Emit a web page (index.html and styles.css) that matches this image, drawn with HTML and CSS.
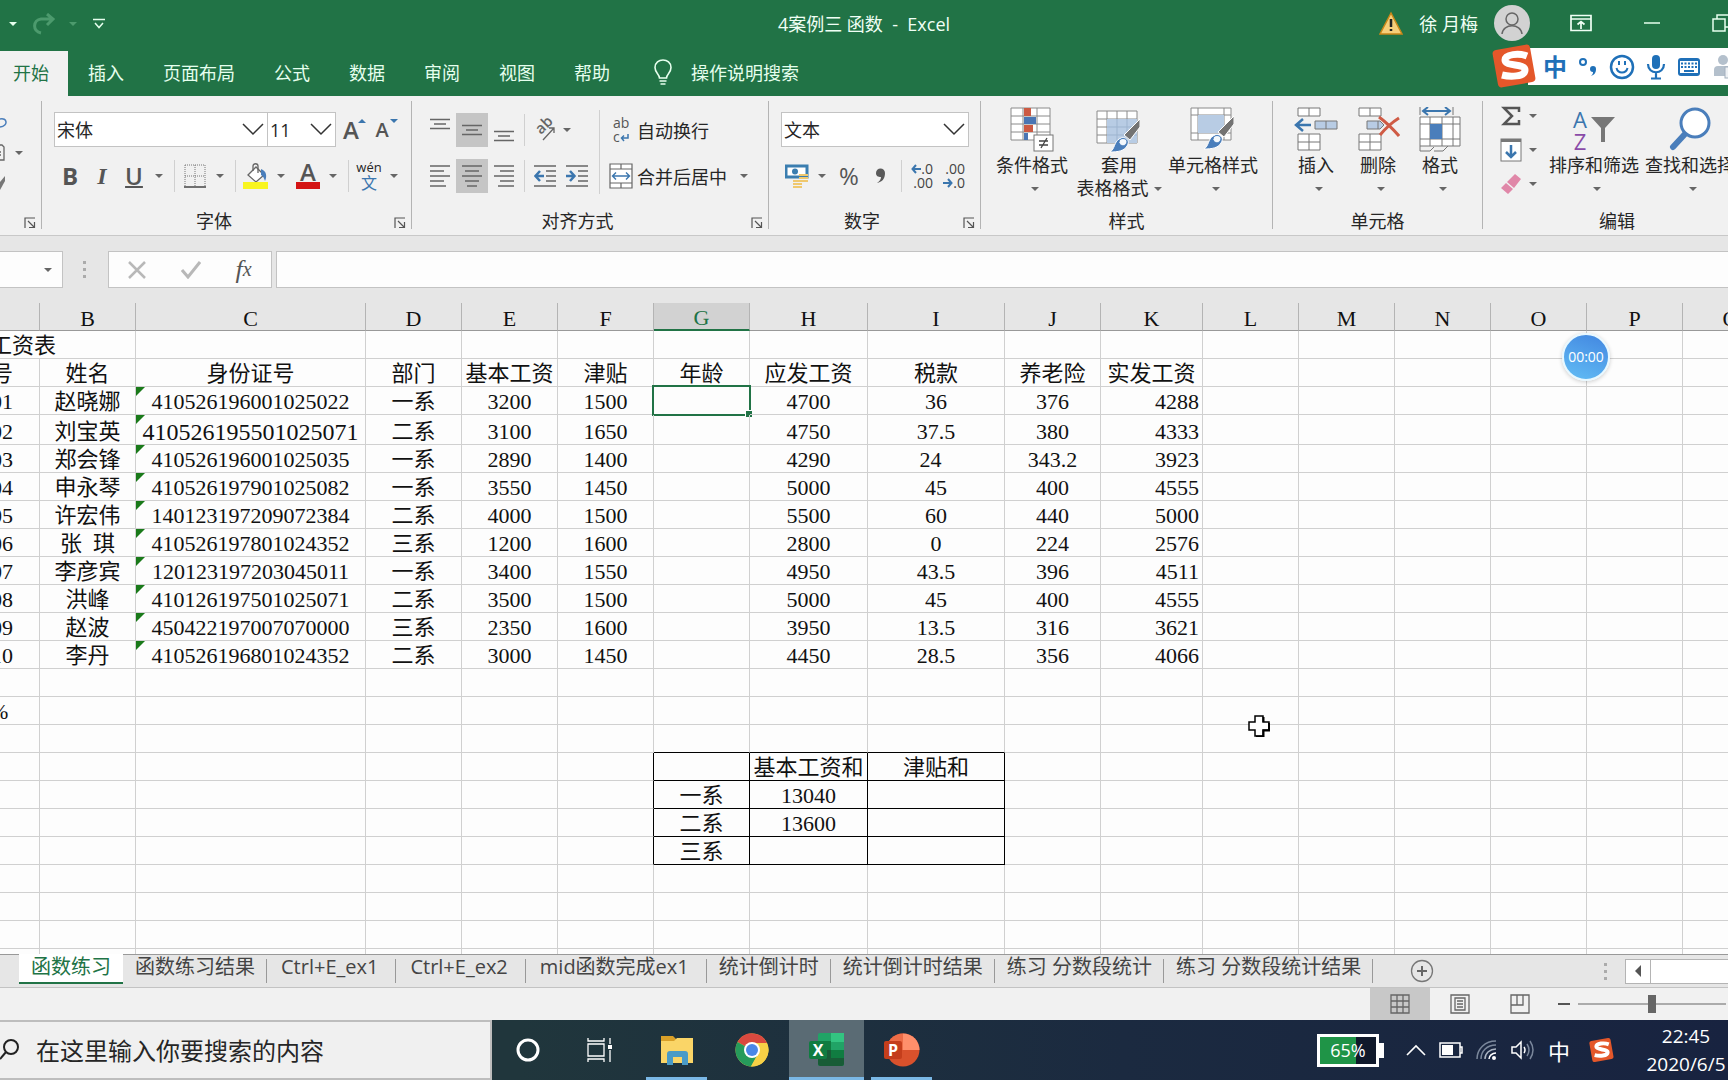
FILE: index.html
```html
<!DOCTYPE html>
<html lang="zh-CN">
<head>
    <meta charset="UTF-8">
    <meta name="viewport" content="width=device-width, initial-scale=1.0">
    <title>4案例三 函数 - Excel</title>
    <link rel="stylesheet" href="styles.css">
</head>
<body>
    <svg class="defs" width="0" height="0">
        <symbol id="launcher" viewBox="0 0 12 12">
            <path d="M1 11V1H11M4 4L10 10M10.5 5V10.5H5" fill="none" stroke="#555" stroke-width="1.2"/>
        </symbol>
        <symbol id="sogou" viewBox="0 0 46 44">
            <rect x="3" y="3" width="38" height="38" rx="4" transform="rotate(-10 22 22)" fill="#e4572a"/>
            <path d="M35 12C27 9 13 10 13 16C13 23 33 19 33 26C33 33 18 33 10 31" fill="none" stroke="#fff" stroke-width="7"/>
        </symbol>
        <symbol id="brush" viewBox="0 0 31 35">
            <path d="M31 1V9L21 22L15 17Z" fill="#737373" stroke="#fff"/>
            <path d="M1 34C6 31 5 24 10 21C16 17 22 23 18 28C15 33 9 34 1 34Z" fill="#4a7ebb" stroke="#fff"/>
            <path d="M10 24C11 19 17 20 18 23C18 27 14 29 12 27" fill="#f3f8fc" stroke="#4a7ebb"/>
        </symbol>
    </svg>

    <header class="titlebar">
        <div class="quick">
            <button class="caret light" aria-label="撤消选项"></button>
            <button aria-label="恢复"><svg width="24" height="22" viewBox="0 0 24 22"><path d="M9 20C0 18 1 7 9 6H20M15 1L21 6L15 12" fill="none" stroke="#4c9a6d" stroke-width="3"/></svg></button>
            <button class="caret faded" aria-label="恢复选项"></button>
            <button aria-label="自定义快速访问工具栏"><svg width="14" height="12" viewBox="0 0 14 12"><path d="M1 1.5H13M3 5L7 9.5L11 5" fill="none" stroke="#e6ffee" stroke-width="1.5"/></svg></button>
        </div>
        <h1 class="doc-title">4案例三 函数&nbsp; -&nbsp; Excel</h1>
        <div class="account">
            <svg width="24" height="24" viewBox="0 0 24 24"><path d="M12 2L23 23H1Z" fill="#f6cf7a" stroke="#c98719" stroke-width="1.5"/><path d="M12 8V16M12 18V20" stroke="#222" stroke-width="2.5"/></svg>
            <span class="user">徐 月梅</span>
            <svg class="avatar" width="36" height="36" viewBox="0 0 36 36"><circle cx="18" cy="18" r="18" fill="#d2d2d2"/><g fill="none" stroke="#666" stroke-width="1.5"><circle cx="18" cy="14" r="6"/><path d="M8 29C9 18 27 18 28 29"/></g></svg>
            <button aria-label="功能区显示选项"><svg width="22" height="18" viewBox="0 0 22 18"><path d="M1 1.5H21V16.5H1ZM1 5H21M11 15V8M7.5 10.5L11 7.5L14.5 10.5" fill="none" stroke="#f0fff5" stroke-width="1.7"/></svg></button>
            <button class="minimize" aria-label="最小化"><svg width="16" height="4" viewBox="0 0 16 4"><path d="M0 2H16" stroke="#e6ffee" stroke-width="1.5"/></svg></button>
            <button aria-label="还原"><svg width="18" height="18" viewBox="0 0 18 18"><path d="M1 5H13V17H1ZM5 5V1H17V13H13" fill="none" stroke="#e6ffee" stroke-width="1.5"/></svg></button>
        </div>
    </header>

    <nav class="tabs">
        <a class="tab active" href="#">开始</a>
        <a class="tab" href="#">插入</a>
        <a class="tab" href="#">页面布局</a>
        <a class="tab" href="#">公式</a>
        <a class="tab" href="#">数据</a>
        <a class="tab" href="#">审阅</a>
        <a class="tab" href="#">视图</a>
        <a class="tab" href="#">帮助</a>
        <a class="tell-me" href="#">
            <svg width="18" height="26" viewBox="0 0 18 26"><path d="M5.5 19C5.5 15 1 14 1 8.500C1 -1.5 17 -1.5 17 8.500C17 14 12.500 15 12.500 19ZM5.500 22H12.500M6.500 25H11.500" fill="none" stroke="#e6ffee" stroke-width="1.6"/></svg>
            操作说明搜索
        </a>
    </nav>

    <div class="ime">
        <svg class="ime-logo" width="46" height="44"><use href="#sogou"/></svg>
        <div class="ime-bar">
            <span class="ime-lang">中</span>
            <svg width="20" height="24" viewBox="0 0 20 24"><circle cx="5" cy="7" r="3" fill="none" stroke="#1f70b8" stroke-width="2"/><path d="M12 14a3 3 0 1 1 6 0c0 4-2 6-5 7 2-2 2-3 2-4-2 0-3-1-3-3Z" fill="#1f70b8"/></svg>
            <svg width="26" height="26" viewBox="0 0 26 26"><circle cx="13" cy="13" r="11" fill="none" stroke="#1f70b8" stroke-width="2.5"/><path d="M10 7V11M16 7V11M7.5 14C9 20 17 20 18.5 14" fill="none" stroke="#1f70b8" stroke-width="2"/></svg>
            <svg width="20" height="26" viewBox="0 0 20 26"><rect x="6" y="1" width="8" height="14" rx="4" fill="#1f70b8"/><path d="M2 10C2 21 18 21 18 10M10 18V24M5 24.5H15" fill="none" stroke="#1f70b8" stroke-width="2.2"/></svg>
            <svg width="24" height="20" viewBox="0 0 24 20"><rect x="1" y="1" width="22" height="18" rx="3" fill="#1f70b8"/><rect x="3" y="4" width="18" height="12" fill="#fff"/><path d="M4 6.500H20M4 10H20" stroke="#1f70b8" stroke-width="2" stroke-dasharray="2 1.500"/><path d="M7 14H17" stroke="#1f70b8" stroke-width="2"/></svg>
            <svg width="24" height="26" viewBox="0 0 24 26"><circle cx="11" cy="6" r="5" fill="#b4c0cc"/><path d="M2 22V16Q2 12 6 12H17Q20 12 20 16V22Z" fill="#b4c0cc"/><rect x="13" y="13" width="11" height="11" fill="#eef1f4" stroke="#a3b0bd"/></svg>
        </div>
    </div>

    <section class="ribbon">
        <div class="group clipboard">
            <div class="group-body clip-body">
                <svg width="10" height="14" viewBox="0 0 10 14"><path d="M0 2C7 0 9 9 0 10" fill="none" stroke="#4a7ebb" stroke-width="1.5"/></svg>
                <div class="row-copy">
                    <svg width="10" height="18" viewBox="0 0 10 18"><path d="M-2 1H2L4 3V16H-2M-2 8H1M-2 11H1" fill="none" stroke="#666" stroke-width="1.3"/></svg>
                    <button class="caret" aria-label="复制选项"></button>
                </div>
                <svg width="10" height="18" viewBox="0 0 10 18"><path d="M5 1L0 7V15L5 6Z" fill="#777"/></svg>
            </div>
            <div class="group-label">&nbsp;<button class="launcher" aria-label="剪贴板设置"><svg width="12" height="12"><use href="#launcher"/></svg></button></div>
        </div>

        <div class="group font-group">
            <div class="group-body rows">
                <div class="row">
                    <select class="combo font-name" aria-label="字体"><option>宋体</option></select>
                    <select class="combo font-size" aria-label="字号"><option>11</option></select>
                    <button class="tool glyph grow" aria-label="增大字号">A<i class="up"></i></button>
                    <button class="tool glyph shrink" aria-label="减小字号">A<i class="down"></i></button>
                </div>
                <div class="row">
                    <button class="tool glyph bold">B</button>
                    <button class="tool glyph italic">I</button>
                    <button class="tool glyph underline">U</button>
                    <button class="caret" aria-label="下划线选项"></button>
                    <span class="sep"></span>
                    <button class="tool" aria-label="边框"><svg width="22" height="24" viewBox="0 0 22 24"><path d="M1 1H21M1 12H21M1 1V22M11 1V22M21 1V22" fill="none" stroke="#777" stroke-dasharray="1 1"/><path d="M0 23H22" stroke="#444" stroke-width="1.5"/></svg></button>
                    <button class="caret" aria-label="边框选项"></button>
                    <span class="sep"></span>
                    <button class="tool" aria-label="填充颜色"><svg width="26" height="26" viewBox="0 0 26 26"><path d="M5 12L13 4L21 12L13 19Z" fill="#fff" stroke="#666" stroke-width="1.3"/><path d="M10 8V3C10 0 15 0 15 3V10" fill="none" stroke="#666" stroke-width="1.3"/><path d="M18 6C24 8 24 14 22 18C21 15 20 13 18 12Z" fill="#4a7ebb"/><rect y="19" width="25" height="7" fill="#f8f520"/></svg></button>
                    <button class="caret" aria-label="填充颜色选项"></button>
                    <button class="tool glyph font-color" aria-label="字体颜色">A</button>
                    <button class="caret" aria-label="字体颜色选项"></button>
                    <span class="sep"></span>
                    <button class="tool pinyin" aria-label="拼音"><span>wén</span><b>文</b></button>
                    <button class="caret" aria-label="拼音选项"></button>
                </div>
            </div>
            <div class="group-label">字体<button class="launcher" aria-label="字体设置"><svg width="12" height="12"><use href="#launcher"/></svg></button></div>
        </div>

        <div class="group align-group">
            <div class="group-body align-body">
                <div class="rows">
                    <div class="row">
                        <button class="tool" aria-label="顶端对齐"><svg width="20" height="32" viewBox="0 0 20 32"><path d="M0 5.500H20M4 10H16M0 14.500H20" stroke="#666" stroke-width="1.3"/></svg></button>
                        <button class="tool on" aria-label="垂直居中"><svg width="20" height="32" viewBox="0 0 20 32"><path d="M0 11.500H20M4 16H16M0 20.500H20" stroke="#666" stroke-width="1.3"/></svg></button>
                        <button class="tool" aria-label="底端对齐"><svg width="20" height="32" viewBox="0 0 20 32"><path d="M0 17.500H20M4 22H16M0 26.500H20" stroke="#666" stroke-width="1.3"/></svg></button>
                        <span class="sep"></span>
                        <button class="tool" aria-label="方向"><svg width="24" height="24" viewBox="0 0 24 24"><text transform="translate(8 17) rotate(-45)" font-size="15" font-weight="600" fill="#666">ab</text><path d="M10 22L21 10M16 10H21V15" fill="none" stroke="#666" stroke-width="1.3"/></svg></button>
                        <button class="caret slim" aria-label="方向选项"></button>
                    </div>
                    <div class="row">
                        <button class="tool" aria-label="左对齐"><svg width="20" height="24" viewBox="0 0 20 24"><path d="M0 2H20M0 7H14M0 12H20M0 17H14M0 22H16" stroke="#666" stroke-width="1.3"/></svg></button>
                        <button class="tool on" aria-label="居中"><svg width="20" height="24" viewBox="0 0 20 24"><path d="M0 2H20M3 7H17M0 12H20M3 17H17M5 22H15" stroke="#666" stroke-width="1.3"/></svg></button>
                        <button class="tool" aria-label="右对齐"><svg width="20" height="24" viewBox="0 0 20 24"><path d="M0 2H20M6 7H20M0 12H20M6 17H20M4 22H20" stroke="#666" stroke-width="1.3"/></svg></button>
                        <span class="sep"></span>
                        <button class="tool" aria-label="减少缩进量"><svg width="22" height="24" viewBox="0 0 22 24"><path d="M0 2H22M12 7H22M12 12H22M12 17H22M0 22H22" stroke="#666" stroke-width="1.3"/><path d="M10 12H2M6 7L1.5 12L6 17" fill="none" stroke="#3b76ae" stroke-width="2.5"/></svg></button>
                        <button class="tool" aria-label="增加缩进量"><svg width="22" height="24" viewBox="0 0 22 24"><path d="M0 2H22M12 7H22M12 12H22M12 17H22M0 22H22" stroke="#666" stroke-width="1.3"/><path d="M0 12H8M4 7L8.5 12L4 17" fill="none" stroke="#3b76ae" stroke-width="2.5"/></svg></button>
                    </div>
                </div>
                <span class="sep tall"></span>
                <div class="rows">
                    <div class="row">
                        <button class="wide"><span class="wrap-icon"><span>ab</span><span>c<svg width="9" height="8" viewBox="0 0 9 8"><path d="M8 0V4H2M4 1.5L1.5 4L4 7" fill="none" stroke="#3b76ae" stroke-width="1.5"/></svg></span></span>自动换行</button>
                    </div>
                    <div class="row">
                        <button class="wide"><svg width="24" height="26" viewBox="0 0 24 26"><path d="M1 1H23V25H1ZM1 6H23M1 20H23M12 1V6M12 20V25" fill="#fff" stroke="#666" stroke-width="1.2"/><path d="M4 13H20M7 9.500L3.500 13L7 16.500M17 9.500L20.500 13L17 16.500" fill="none" stroke="#3b76ae" stroke-width="1.4"/></svg>合并后居中</button>
                        <button class="caret merge" aria-label="合并选项"></button>
                    </div>
                </div>
            </div>
            <div class="group-label">对齐方式<button class="launcher" aria-label="对齐设置"><svg width="12" height="12"><use href="#launcher"/></svg></button></div>
        </div>

        <div class="group number-group">
            <div class="group-body rows">
                <div class="row">
                    <select class="combo number-format" aria-label="数字格式"><option>文本</option></select>
                </div>
                <div class="row">
                    <button class="tool" aria-label="会计数字格式"><svg width="24" height="24" viewBox="0 0 24 24"><rect x="1" y="2" width="21" height="11" fill="#fff" stroke="#3b7eb0" stroke-width="3"/><circle cx="10" cy="7.5" r="3" fill="#3b7eb0"/><path d="M14 11H23M14 14H23M14 17H23M8 17H17M8 20H17M8 23H17" stroke="#efc86e" stroke-width="2"/></svg></button>
                    <button class="caret" aria-label="会计格式选项"></button>
                    <button class="tool glyph percent">%</button>
                    <button class="tool" aria-label="千位分隔样式"><svg width="12" height="16" viewBox="0 0 12 16"><path d="M1 5a4.500 4.500 0 1 1 9 0c0 6-3 9-8 10c3-2 4-4 4-6c-3 0-5-1-5-4Z" fill="#5a5a5a"/></svg></button>
                    <span class="sep"></span>
                    <button class="tool decimals" aria-label="增加小数位数"><span><svg width="10" height="10" viewBox="0 0 10 10"><path d="M10 5H2M5 1L1.5 5L5 9" fill="none" stroke="#3b76ae" stroke-width="2"/></svg>.0</span><span>.00</span></button>
                    <button class="tool decimals" aria-label="减少小数位数"><span>.00</span><span><svg width="10" height="10" viewBox="0 0 10 10"><path d="M0 5H8M5 1L8.5 5L5 9" fill="none" stroke="#3b76ae" stroke-width="2"/></svg>.0</span></button>
                </div>
            </div>
            <div class="group-label">数字<button class="launcher" aria-label="数字设置"><svg width="12" height="12"><use href="#launcher"/></svg></button></div>
        </div>

        <div class="group style-group">
            <div class="group-body bigs">
                <button class="big">
                    <svg width="44" height="46" viewBox="0 0 44 46"><path d="M1 1H40V33H1ZM1 9H40M1 17H40M1 25H40M13 1V33M27 1V33" fill="#fff" stroke="#8a8a8a"/><path d="M14 1H21V9H14ZM14 18H23V25H14Z" fill="#cc5a43"/><path d="M14 10H26V17H14ZM14 26H18V33H14Z" fill="#4a76b4"/><rect x="24" y="28" width="19" height="16" fill="#fff" stroke="#777"/><path d="M29 34H38M29 38H38M37 31L31 41" stroke="#444" stroke-width="1.3"/></svg>
                    <span>条件格式</span><span><i class="arrow"></i></span>
                </button>
                <button class="big">
                    <svg width="46" height="46" viewBox="0 0 46 46"><path d="M1 4H41V36H1ZM1 12H41M1 20H41M1 28H41M11 4V36M21 4V36M31 4V36" fill="#fff" stroke="#8a8a8a"/><path d="M11 12H41V36H11Z" fill="#b8cce4"/><path d="M11 20H41M11 28H41M21 12V36M31 12V36" stroke="#9db4cf"/><use href="#brush" x="13" y="11" width="31" height="35"/></svg>
                    <span>套用</span><span>表格格式<i class="arrow beside"></i></span>
                </button>
                <button class="big">
                    <svg width="46" height="46" viewBox="0 0 46 46"><path d="M1 1H41V33H1ZM1 8H41M1 26H41M8 1V33M34 1V33" fill="#fff" stroke="#8a8a8a"/><path d="M8 8H34V26H8Z" fill="#b8cce4"/><use href="#brush" x="13" y="8" width="31" height="35"/></svg>
                    <span>单元格样式</span><span><i class="arrow"></i></span>
                </button>
            </div>
            <div class="group-label">样式</div>
        </div>

        <div class="group cells-group">
            <div class="group-body bigs">
                <button class="big">
                    <svg width="44" height="46" viewBox="0 0 44 46"><path d="M4 1H26V9H4ZM15 1V9M4 27H26V43H4ZM4 35H26M15 27V43" fill="#fff" stroke="#777"/><path d="M21 14H43V22H21ZM32 14V22" fill="#b8cce4" stroke="#777"/><path d="M17 18H3M9 12L2 18L9 24" fill="none" stroke="#3b76ae" stroke-width="2.5"/></svg>
                    <span>插入</span><span><i class="arrow"></i></span>
                </button>
                <button class="big">
                    <svg width="44" height="46" viewBox="0 0 44 46"><path d="M3 1H25V9H3ZM14 1V9M3 27H25V43H3ZM3 35H25M14 27V43" fill="#fff" stroke="#777"/><path d="M11 14H24L28 18L24 22H11ZM22 14V22" fill="#b8cce4" stroke="#777"/><path d="M23 10C31 16 37 22 43 29M43 11C35 16 29 22 24 28" fill="none" stroke="#cf5b45" stroke-width="3"/></svg>
                    <span>删除</span><span><i class="arrow"></i></span>
                </button>
                <button class="big">
                    <svg width="44" height="46" viewBox="0 0 44 46"><path d="M2 0V8M35 0V8" stroke="#777"/><path d="M6 4H31M10 0L5 4L10 8M27 0L32 4L27 8" fill="none" stroke="#3b76ae" stroke-width="2"/><path d="M2 10H42V39H2ZM2 17H42M2 32H42M12 10V39M24 10V39M35 10V39" fill="#fff" stroke="#777"/><path d="M12 17H24V32H12Z" fill="#4a7ebb"/><path d="M2 39V44H12L16 40M16 44H25L30 39" fill="none" stroke="#777"/></svg>
                    <span>格式</span><span><i class="arrow"></i></span>
                </button>
            </div>
            <div class="group-label">单元格</div>
        </div>

        <div class="group edit-group">
            <div class="group-body edit-body">
                <div class="stack">
                    <div class="stack-row"><button class="tool" aria-label="自动求和"><svg width="20" height="20" viewBox="0 0 20 20"><path d="M18 6V2H3L11 10L3 18H18V14" fill="none" stroke="#555" stroke-width="2.5"/></svg></button><button class="caret slim" aria-label="求和选项"></button></div>
                    <div class="stack-row"><button class="tool" aria-label="填充"><svg width="22" height="24" viewBox="0 0 22 24"><rect x="1" y="1" width="20" height="22" fill="#fff" stroke="#777"/><rect x="1" y="1" width="20" height="3" fill="#777"/><path d="M11 7V19M6 14L11 19L16 14" fill="none" stroke="#3b76ae" stroke-width="2.5"/></svg></button><button class="caret slim" aria-label="填充选项"></button></div>
                    <div class="stack-row"><button class="tool" aria-label="清除"><svg width="22" height="22" viewBox="0 0 22 22"><path d="M15 1L21 6L14 15L7 9ZM6 10L13 16L8 21L1 15Z" fill="#e087a8"/></svg></button><button class="caret slim" aria-label="清除选项"></button></div>
                </div>
                <button class="big edit-big">
                    <span class="sort-icon"><span class="az"><b class="a">A</b><b class="z">Z</b></span><svg width="24" height="26" viewBox="0 0 24 26"><path d="M0 0H24L14 11V25H10V11Z" fill="#777"/></svg></span>
                    <span>排序和筛选</span><span><i class="arrow"></i></span>
                </button>
                <button class="big edit-big">
                    <svg width="42" height="46" viewBox="0 0 42 46"><path d="M16 27L4 40" stroke="#4a7ebb" stroke-width="6" stroke-linecap="round"/><circle cx="26" cy="16" r="14" fill="#fff" stroke="#4a7ebb" stroke-width="3"/></svg>
                    <span>查找和选择</span><span><i class="arrow"></i></span>
                </button>
            </div>
            <div class="group-label">编辑</div>
        </div>
    </section>

    <section class="formula-bar">
        <div class="name-box"><input type="text" aria-label="名称框"><button class="caret" aria-label="名称列表"></button></div>
        <span class="dots"><i></i><i></i><i></i></span>
        <div class="fx-buttons">
            <button aria-label="取消"><svg width="18" height="18" viewBox="0 0 18 18"><path d="M1 1L17 17M17 1L1 17" stroke="#b8b8b8" stroke-width="2.5"/></svg></button>
            <button aria-label="输入"><svg width="20" height="18" viewBox="0 0 20 18"><path d="M1 9L7 16L19 1" fill="none" stroke="#b8b8b8" stroke-width="3"/></svg></button>
            <button class="fx" aria-label="插入函数">f<small>x</small></button>
        </div>
        <input class="formula" type="text" aria-label="编辑栏">
    </section>

    <main class="sheet">
        <table class="grid" id="grid"></table>
        <div class="recorder">00:00</div>
        <svg class="pointer" width="22" height="22" viewBox="0 0 22 22"><path d="M7 1H15V7H21V15H15V21H7V15H1V7H7Z" fill="#fff" stroke="#000" stroke-width="1.5"/><path d="M15.5 2V7M21 8V15.5H15.5V21.5H8" fill="none" stroke="#000" stroke-width="2"/></svg>
    </main>

    <nav class="sheet-tabs">
        <a class="sheet-tab active" href="#">函数练习</a>
        <a class="sheet-tab" href="#">函数练习结果</a>
        <a class="sheet-tab latin" href="#">Ctrl+E_ex1</a>
        <a class="sheet-tab latin" href="#">Ctrl+E_ex2</a>
        <a class="sheet-tab latin" href="#">mid函数完成ex1</a>
        <a class="sheet-tab" href="#">统计倒计时</a>
        <a class="sheet-tab" href="#">统计倒计时结果</a>
        <a class="sheet-tab" href="#">练习 分数段统计</a>
        <a class="sheet-tab" href="#">练习 分数段统计结果</a>
        <button class="add" aria-label="新工作表"><svg width="24" height="24" viewBox="0 0 24 24"><circle cx="12" cy="12" r="10.5" fill="none" stroke="#777" stroke-width="1.3"/><path d="M12 7V17M7 12H17" stroke="#666" stroke-width="2"/></svg></button>
        <div class="hscroll">
            <span class="dots"><i></i><i></i><i></i></span>
            <button class="scroll-left" aria-label="向左滚动"></button>
            <span class="track"></span>
        </div>
    </nav>

    <footer class="status">
        <button class="view on" aria-label="普通"><svg width="20" height="20" viewBox="0 0 20 20"><path d="M1 1H19V19H1ZM1 7H19M1 13H19M7 1V19M13 1V19" fill="none" stroke="#666" stroke-width="1.3"/></svg></button>
        <button class="view" aria-label="页面布局"><svg width="20" height="20" viewBox="0 0 20 20"><path d="M1 1H19V19H1ZM5 4H15V16H5ZM7 7H13M7 10H13M7 13H13" fill="none" stroke="#666" stroke-width="1.3"/></svg></button>
        <button class="view" aria-label="分页预览"><svg width="20" height="20" viewBox="0 0 20 20"><path d="M1 1H19V19H1ZM1 11H13V1M7 1V11" fill="none" stroke="#666" stroke-width="1.3"/></svg></button>
        <button class="zoom-out" aria-label="缩小"></button>
        <input class="zoom" type="range" min="0" max="100" value="50" aria-label="显示比例">
    </footer>

    <div class="taskbar">
        <label class="search">
            <svg width="20" height="22" viewBox="0 0 20 22"><circle cx="11" cy="8" r="7" fill="none" stroke="#222" stroke-width="2"/><path d="M6 13L0 20" stroke="#222" stroke-width="2"/></svg>
            <input type="text" placeholder="在这里输入你要搜索的内容">
        </label>
        <button class="app system" aria-label="Cortana"><svg width="26" height="26" viewBox="0 0 26 26"><circle cx="13" cy="13" r="10" fill="none" stroke="#fff" stroke-width="3"/></svg></button>
        <button class="app system" aria-label="任务视图"><svg width="26" height="26" viewBox="0 0 26 26"><path d="M1 1V4H17V1M1 7H17V19H1ZM1 25V22H17V25M23 1V7M23 13V25" fill="none" stroke="#fff" stroke-width="1.3"/><rect x="21" y="8" width="4" height="4" fill="#fff"/></svg></button>
        <div class="pinned">
            <button class="app running" aria-label="文件资源管理器"><svg width="34" height="30" viewBox="0 0 34 30"><path d="M1 1H13L16 4V8H1Z" fill="#d9a028"/><path d="M1 6H14L17 3H33V28H1Z" fill="#fad567"/><path d="M7 30V19Q7 16 10 16H25Q28 16 28 19V30H22V22H13V30Z" fill="#4a9bc7"/></svg></button>
            <button class="app" aria-label="Chrome"><svg width="34" height="34" viewBox="0 0 34 34"><circle cx="17" cy="17" r="16.5" fill="#f7d046"/><path d="M17 17L2.5 9A16.500 16.500 0 0 1 32 10Z" fill="#d9493f"/><path d="M17 17L2.5 9A16.500 16.500 0 0 0 16 33.500L23 21Z" fill="#269b5b"/><path d="M17 10H32A16.500 16.500 0 0 1 16 33.500L23 21Z" fill="#f7d046"/><circle cx="17" cy="17" r="8" fill="#fff"/><circle cx="17" cy="17" r="6" fill="#4a87e8"/></svg></button>
            <button class="app running current" aria-label="Excel"><svg width="36" height="34" viewBox="0 0 36 34"><rect x="9" width="26" height="33" rx="2" fill="#21a366"/><rect x="22" width="13" height="9" fill="#33c481"/><rect x="9" y="8" width="13" height="9" fill="#107c41"/><rect x="9" y="17" width="26" height="16" rx="2" fill="#185c37"/><rect x="22" y="17" width="13" height="8" fill="#107c41"/><rect y="8" width="18" height="18" rx="2" fill="#107c41"/><text x="9" y="23" text-anchor="middle" font-size="16" font-weight="700" fill="#fff">X</text></svg></button>
            <button class="app running" aria-label="PowerPoint"><svg width="36" height="34" viewBox="0 0 36 34"><circle cx="19" cy="17" r="16.5" fill="#d9512c"/><path d="M19 .5A16.500 16.500 0 0 1 35.500 17H19Z" fill="#ff8f6b"/><path d="M2.5 17A16.500 16.500 0 0 1 19 .5V17Z" fill="#ed6c47"/><rect y="8" width="18" height="18" rx="2" fill="#c43e1c"/><text x="9" y="23" text-anchor="middle" font-size="16" font-weight="700" fill="#fff">P</text></svg></button>
        </div>
        <div class="tray">
            <div class="battery"><span>65%</span></div>
            <svg width="20" height="12" viewBox="0 0 20 12"><path d="M1 11L10 2L19 11" fill="none" stroke="#fff" stroke-width="1.6"/></svg>
            <svg width="24" height="16" viewBox="0 0 24 16"><path d="M1 1H21V15H1ZM21 5H23V11H21" fill="none" stroke="#fff" stroke-width="1.5"/><rect x="3" y="3" width="11" height="10" fill="#fff"/></svg>
            <svg width="22" height="22" viewBox="0 0 22 22"><g fill="none" stroke-width="1.5"><path d="M1 20C1 10 9 2 20 2M5 20C5 12 11 6 20 6" stroke="#7a879b"/><path d="M9 20C9 14 14 10 20 10" stroke="#a9b3c1"/><path d="M13 20C13 17 16 14 20 14" stroke="#fff"/></g><circle cx="18" cy="19" r="2" fill="#fff"/></svg>
            <svg width="24" height="22" viewBox="0 0 24 22"><path d="M1 8H5L10 3V19L5 14H1Z" fill="none" stroke="#fff" stroke-width="1.5"/><path d="M13 8Q15 11 13 14" fill="none" stroke="#fff" stroke-width="1.5"/><path d="M16 5Q20 11 16 17M19 2Q25 11 19 20" fill="none" stroke="#7a879b" stroke-width="1.5"/></svg>
            <span class="tray-lang">中</span>
            <svg class="tray-ime" width="26" height="26"><use href="#sogou"/></svg>
            <div class="clock"><span>22:45</span><span>2020/6/5</span></div>
        </div>
    </div>

    <script>
        const columns = [["A", 50], ["B", 96], ["C", 230], ["D", 96], ["E", 96], ["F", 96], ["G", 96], ["H", 118], ["I", 137],
            ["J", 96], ["K", 102], ["L", 96], ["M", 96], ["N", 96], ["O", 96], ["P", 96], ["Q", 96], ["R", 96], ["S", 96], ["T", 96]];
        const rowCount = 36;

        // Filled cells, one array per row, starting in column A
        const data = {
            1: ["工资表"],
            2: ["号", "姓名", "身份证号", "部门", "基本工资", "津贴", "年龄", "应发工资", "税款", "养老险", "实发工资"],
            3: ["01", "赵晓娜", "410526196001025022", "一系", "3200", "1500", "", "4700", "36", "376", "4288"],
            4: ["02", "刘宝英", "410526195501025071", "二系", "3100", "1650", "", "4750", "37.5", "380", "4333"],
            5: ["03", "郑会锋", "410526196001025035", "一系", "2890", "1400", "", "4290", "24  ", "343.2", "3923"],
            6: ["04", "申永琴", "410526197901025082", "一系", "3550", "1450", "", "5000", "45", "400", "4555"],
            7: ["05", "许宏伟", "140123197209072384", "二系", "4000", "1500", "", "5500", "60", "440", "5000"],
            8: ["06", "张  琪", "410526197801024352", "三系", "1200", "1600", "", "2800", "0", "224", "2576"],
            9: ["07", "李彦宾", "120123197203045011", "一系", "3400", "1550", "", "4950", "43.5", "396", "4511"],
            10: ["08", "洪峰", "410126197501025071", "二系", "3500", "1500", "", "5000", "45", "400", "4555"],
            11: ["09", "赵波", "450422197007070000", "三系", "2350", "1600", "", "3950", "13.5", "316", "3621"],
            12: ["10", "李丹", "410526196801024352", "二系", "3000", "1450", "", "4450", "28.5", "356", "4066"],
            14: ["%  "],
            16: ["", "", "", "", "", "", "", "基本工资和", "津贴和"],
            17: ["", "", "", "", "", "", "一系", "13040"],
            18: ["", "", "", "", "", "", "二系", "13600"],
            19: ["", "", "", "", "", "", "三系"]
        };

        function cellClass(row, name) {
            const list = [];
            if (name === "A") list.push(row === 1 ? "title" : "number");
            if (name === "K" && row > 2) list.push("right");
            if (name === "C" && row >= 3 && row <= 12) list.push("flag");
            if (name === "C" && row === 4) list.push("larger");
            if (name === "G" && row === 3) list.push("selected");
            // Outline of the summary block G16:I19
            if (row >= 15 && row <= 19 && "GHI".includes(name)) list.push("line-bottom");
            if (row >= 16 && row <= 19 && "FGHI".includes(name)) list.push("line-right");
            return list.join(" ");
        }

        let html = "<colgroup>" + columns.map(c => `<col style="width: ${c[1]}px">`).join("") + "</colgroup>";
        html += "<thead><tr>" + columns.map(c => `<th class="${c[0] === "G" ? "current" : ""}">${c[0] === "A" ? "" : c[0]}</th>`).join("") + "</tr></thead><tbody>";
        for (let r = 1; r <= rowCount; r++) {
            html += `<tr class="${r === 4 ? "taller" : ""}">`;
            columns.forEach((c, i) => {
                if (r === 1 && i === 1) return;
                const text = (data[r] && data[r][i]) || "";
                html += `<td class="${cellClass(r, c[0])}"${r === 1 && i === 0 ? ' colspan="2"' : ""}>${text}</td>`;
            });
            html += "</tr>";
        }
        document.getElementById("grid").innerHTML = html + "</tbody>";
    </script>
</body>
</html>
```
FILE: styles.css
```css
* {
    box-sizing: border-box;
}
body {
    margin: 0;
    height: 100vh;
    display: flex;
    flex-direction: column;
    overflow: hidden;
    position: relative;
    font-family: "Open Sans", "Noto Sans CJK SC", sans-serif;
    font-size: 18px;
    color: #262626;
    background: #e6e6e6;
}
button {
    border: none;
    background: none;
    padding: 0;
    margin: 0;
    font: inherit;
    color: inherit;
    display: flex;
    align-items: center;
    justify-content: center;
}
a {
    color: inherit;
    text-decoration: none;
}
svg {
    flex: none;
    display: block;
}
.defs {
    position: absolute;
}

/* small drop-down arrows */
.caret {
    width: 18px;
    height: 32px;
    margin-right: 2px;
    flex: none;
}
.caret::before, .arrow {
    content: "";
    display: block;
    border: 4px solid transparent;
    border-top-color: #666;
    border-bottom: none;
}
.caret.slim {
    width: 12px;
    margin: 0;
}
.caret.light::before {
    border-top-color: #e6ffee;
}
.caret.faded::before {
    border-top-color: #4c9a6d;
}

/* title bar */
.titlebar {
    display: grid;
    grid-template-columns: 1fr auto 1fr;
    align-items: center;
    height: 51px;
    flex: none;
    padding-bottom: 6px;
    background: #217346;
    color: #f0fff5;
}
.quick {
    display: flex;
    align-items: center;
    padding: 3px 0 0 4px;
    gap: 8px;
}
.doc-title {
    margin: 0;
    font-size: 18px;
    font-weight: 400;
}
.account {
    display: flex;
    align-items: center;
    justify-content: flex-end;
    margin-right: -2px;
}
.user {
    margin: 0 16px;
}
.avatar {
    margin-right: 40px;
}
.minimize {
    margin: 0 52px;
}

/* ribbon tabs */
.tabs {
    display: flex;
    height: 45px;
    flex: none;
    background: #217346;
    color: #e6ffee;
}
.tab {
    display: flex;
    align-items: center;
    padding: 0 19px 3px 20px;
}
.tab.active {
    padding-left: 13px;
    background: #f1f1f1;
    color: #217346;
}
.tell-me {
    display: flex;
    align-items: center;
    gap: 19px;
    margin-left: 25px;
    padding-bottom: 3px;
}

/* floating input method bar */
.ime {
    position: absolute;
    top: 44px;
    right: 0;
    width: 236px;
    height: 44px;
}
.ime-logo {
    position: absolute;
    z-index: 1;
}
.ime-bar {
    display: flex;
    align-items: center;
    gap: 11px;
    height: 37px;
    margin: 4px 0 0 36px;
    padding-left: 15px;
    background: #fff;
    overflow: hidden;
}
.ime-lang {
    font-size: 24px;
    font-weight: 700;
    line-height: 36px;
    color: #1f70b8;
}

/* ribbon */
.ribbon {
    display: flex;
    flex: none;
    padding: 5px 0 6px;
    background: #f1f1f1;
    border-bottom: 1px solid #c8c8c8;
    overflow: hidden;
}
.group {
    display: flex;
    flex-direction: column;
    flex: none;
    height: 128px;
    border-right: 1px solid #b4b4b4;
}
.group-body {
    height: 112px;
}
.group-label {
    position: relative;
    line-height: 16px;
    text-align: center;
}
.launcher {
    position: absolute;
    right: 5px;
    bottom: 0;
}
.clipboard {
    width: 42px;
}
.font-group {
    width: 370px;
}
.align-group {
    width: 357px;
}
.number-group {
    width: 212px;
}
.font-group .group-label, .align-group .group-label, .number-group .group-label {
    padding-right: 25px;
}
.style-group {
    width: 292px;
}
.cells-group {
    width: 210px;
}
.edit-group {
    width: 268px;
    border-right: none;
}
.clip-body {
    display: flex;
    flex-direction: column;
    justify-content: space-between;
    padding: 16px 0 20px;
}
.row-copy {
    display: flex;
    align-items: center;
    height: 18px;
}
.rows {
    display: flex;
    flex-direction: column;
    gap: 11px;
    padding: 11px 0 0 12px;
}
.row {
    display: flex;
    align-items: center;
    height: 35px;
}
.combo {
    height: 35px;
    border: 1px solid #c3c3c3;
    border-radius: 0;
    padding: 0 4px 0 2px;
    font: inherit;
    color: #262626;
    appearance: none;
    background: #fff url("data:image/svg+xml,%3Csvg xmlns='http://www.w3.org/2000/svg' width='22' height='13'%3E%3Cpath d='M1 1L11 11L21 1' fill='none' stroke='%23333' stroke-width='1.5'/%3E%3C/svg%3E") no-repeat right 3px center;
}
.font-name {
    width: 214px;
}
.font-size {
    width: 69px;
    margin-left: -1px;
}
.number-format {
    width: 188px;
}
.tool {
    width: 32px;
    height: 34px;
    flex: none;
}
.tool.on {
    background: #c5c5c5;
}
.glyph {
    position: relative;
    font-size: 24px;
    font-weight: 600;
    line-height: 32px;
    color: #555;
}
.glyph.shrink {
    font-size: 20px;
}
.glyph.grow {
    width: 30px;
}
.up, .down {
    position: absolute;
    top: 6px;
    right: 0;
    border: 4px solid transparent;
}
.up {
    border-bottom-color: #3b76ae;
    border-top: none;
}
.down {
    border-top-color: #3b76ae;
    border-bottom: none;
}
.bold {
    font-weight: 700;
}
.italic {
    font-family: "Liberation Serif", serif;
    font-style: italic;
}
.underline {
    text-decoration: underline;
    text-decoration-thickness: 2px;
}
.percent {
    font-weight: 400;
}
.font-color {
    align-items: flex-start;
    line-height: 26px;
}
.font-color::after {
    content: "";
    position: absolute;
    left: 4px;
    bottom: 4px;
    width: 24px;
    height: 7px;
    background: #d41414;
}
.sep {
    width: 1px;
    height: 32px;
    margin: 0 4px;
    background: #d0d0d0;
    flex: none;
}
.sep.tall {
    height: 84px;
    margin: 9px 4px 0 6px;
}
.pinyin {
    flex-direction: column;
    font-size: 13px;
    line-height: 14px;
}
.pinyin b {
    font-size: 16px;
    font-weight: 400;
    line-height: 18px;
    color: #3b76ae;
}
.align-body {
    display: flex;
}
.sep + .rows {
    padding-left: 5px;
}
.wide {
    gap: 4px;
}
.wrap-icon {
    display: flex;
    flex-direction: column;
    width: 24px;
    padding-left: 4px;
    font-size: 14px;
    line-height: 14px;
    text-align: left;
    color: #555;
}
.wrap-icon svg {
    display: inline-block;
}
.merge {
    margin-left: 8px;
}
.decimals {
    flex-direction: column;
    align-items: flex-end;
    padding-right: 5px;
    font-size: 14px;
    line-height: 14px;
    color: #444;
}
.decimals span {
    display: flex;
    align-items: center;
}
.bigs {
    display: flex;
}
.style-group .bigs {
    padding-left: 9px;
}
.cells-group .bigs {
    padding-left: 12px;
}
.big {
    flex-direction: column;
    justify-content: flex-start;
    width: 62px;
    padding-top: 6px;
    white-space: nowrap;
}
.big > svg, .sort-icon {
    margin-bottom: 1px;
}
.big > span:not(.sort-icon) {
    display: flex;
    align-items: center;
    height: 23px;
    line-height: 23px;
}
.big .arrow {
    margin-left: 5px;
}
.style-group .big {
    width: 84px;
}
.style-group .big + .big {
    width: 90px;
}
.style-group .big + .big + .big {
    width: 98px;
}
.edit-body {
    display: flex;
    gap: 2px;
    padding-left: 12px;
}
.stack {
    display: flex;
    flex-direction: column;
    gap: 4px;
    width: 50px;
}
.stack-row {
    display: flex;
    align-items: center;
    height: 30px;
}
.edit-big {
    width: 94px;
}
.sort-icon {
    display: flex;
    align-items: center;
    gap: 4px;
    height: 46px;
}
.az {
    display: flex;
    flex-direction: column;
    font-size: 22px;
    line-height: 22px;
}
.az b {
    font-weight: 400;
}
.a {
    color: #3b76ae;
}
.z {
    color: #8a4ba8;
}

/* formula bar */
.formula-bar {
    display: flex;
    align-items: center;
    flex: none;
    height: 67px;
}
.name-box, .fx-buttons, .formula {
    display: flex;
    align-items: center;
    height: 37px;
    background: #fdfdfd;
    border: 1px solid #c3c3c3;
}
.name-box {
    width: 63px;
    border-left: none;
}
.name-box input {
    width: 39px;
    border: none;
    background: none;
}
.dots {
    display: flex;
    flex-direction: column;
    gap: 4px;
    width: 3px;
}
.dots i {
    height: 3px;
    background: #ababab;
}
.formula-bar .dots {
    margin: 0 22px 0 20px;
}
.fx-buttons {
    width: 164px;
    justify-content: space-around;
    padding: 0 2px 0 2px;
}
.fx {
    font-family: "Liberation Serif", serif;
    font-style: italic;
    font-size: 26px;
    color: #555;
}
.fx small {
    font-size: 20px;
}
.formula {
    flex: 1;
    margin-left: 4px;
    border-right: none;
}

/* worksheet */
.sheet {
    position: relative;
    flex: 1;
    min-height: 0;
    overflow: hidden;
    background: #fdfdfd;
}
.grid {
    table-layout: fixed;
    width: 0;
    margin-left: -10px;
    border-spacing: 0;
    font-family: "Liberation Serif", "Noto Sans CJK SC", serif;
    font-size: 22px;
    line-height: 24px;
    color: #111;
}
.grid th {
    height: 28px;
    padding: 4px 0 0;
    font-weight: 400;
    line-height: 22px;
    background: #e6e6e6;
    border-right: 1px solid #b4b4b4;
    border-bottom: 1px solid #999;
}
.grid th.current {
    color: #217346;
    background: #d2d2d2;
    border-bottom: 2px solid #217346;
}
.grid td {
    position: relative;
    height: 28px;
    padding: 3px 0 0;
    line-height: 24px;
    vertical-align: bottom;
    text-align: center;
    white-space: pre;
    border-right: 1px solid #d0d0d0;
    border-bottom: 1px solid #d0d0d0;
}
.grid .taller td {
    height: 30px;
}
.grid .title {
    text-align: left;
}
.grid .number {
    text-align: right;
    padding-right: 26px;
}
.grid .right {
    text-align: right;
    padding-right: 3px;
}
.grid .larger {
    font-size: 24px;
}
.grid .line-bottom {
    border-bottom-color: #000;
}
.grid .line-right {
    border-right-color: #000;
}
.flag::before {
    content: "";
    position: absolute;
    top: 0;
    left: 0;
    border: 0 solid transparent;
    border-width: 9px 9px 0 0;
    border-top-color: #1a7a1a;
}
.selected::before {
    content: "";
    position: absolute;
    inset: -2px;
    border: 2px solid #217346;
}
.selected::after {
    content: "";
    position: absolute;
    right: -3px;
    bottom: -3px;
    width: 6px;
    height: 6px;
    background: #217346;
    box-shadow: -1px -1px 0 #fff;
}
.recorder {
    position: absolute;
    top: 30px;
    right: 118px;
    width: 48px;
    height: 48px;
    border: 2px solid #e8f8ff;
    border-radius: 50%;
    background: linear-gradient(200deg, #4286e0, #62bdf5);
    box-shadow: 0 1px 4px rgba(0, 0, 0, 0.2);
    color: #fff;
    font-size: 14px;
    line-height: 44px;
    text-align: center;
}
.pointer {
    position: absolute;
    left: 1248px;
    top: 412px;
}

/* sheet tabs */
.sheet-tabs {
    display: flex;
    flex: none;
    height: 34px;
    padding-left: 19px;
    font-size: 20px;
    color: #444;
    border-top: 1px solid #999;
    border-bottom: 1px solid #c3c3c3;
    white-space: nowrap;
}
.sheet-tab {
    position: relative;
    height: 29px;
    padding: 0 12px;
    line-height: 24px;
}
.sheet-tab::after {
    content: "";
    position: absolute;
    right: 0;
    top: 4px;
    height: 24px;
    border-right: 1px solid #999;
}
.sheet-tab.latin {
    padding: 0 18px 0 14px;
}
.sheet-tab.active {
    margin-top: -1px;
    height: 30px;
    line-height: 26px;
    background: #fff;
    color: #217346;
    border-bottom: 2px solid #217346;
}
.sheet-tab.active::after {
    display: none;
}
.add {
    margin-left: 37px;
}
.hscroll {
    display: flex;
    align-items: center;
    margin-left: auto;
}
.hscroll .dots {
    margin-right: 18px;
}
.scroll-left {
    width: 26px;
    height: 25px;
    background: #fff;
    border: 1px solid #b4b4b4;
}
.scroll-left::before {
    content: "";
    border: 6px solid transparent;
    border-right-color: #555;
    border-left: none;
}
.track {
    width: 77px;
    height: 25px;
    background: #fff;
    border: 1px solid #b4b4b4;
    border-width: 1px 0;
}

/* status bar */
.status {
    display: flex;
    align-items: center;
    justify-content: flex-end;
    flex: none;
    height: 32px;
    background: #f1f1f1;
}
.view {
    width: 60px;
    height: 32px;
}
.view.on {
    background: #c8c8c8;
}
.zoom-out {
    width: 12px;
    height: 2px;
    margin: 0 8px;
    background: #555;
}
.zoom {
    width: 148px;
    height: 18px;
    margin: 0 2px 0 0;
    appearance: none;
    background: linear-gradient(#ababab, #ababab) no-repeat center / 100% 2px;
}
.zoom::-webkit-slider-thumb {
    appearance: none;
    width: 8px;
    height: 18px;
    background: #666;
}

/* taskbar */
.taskbar {
    display: flex;
    flex: none;
    height: 60px;
    background: linear-gradient(90deg, #20363c 30%, #1b2a40 65%, #182340);
    color: #fff;
}
.search {
    display: flex;
    align-items: center;
    width: 492px;
    background: #f0f0f0;
    border: 2px solid #bdbdbd;
    border-left: none;
}
.search input {
    flex: 1;
    margin-left: 14px;
    border: none;
    background: none;
    font: inherit;
    font-size: 24px;
}
.search input::placeholder {
    color: #262626;
}
.pinned {
    display: flex;
    margin-left: 3px;
}
.app {
    position: relative;
    width: 75px;
}
.system {
    width: 72px;
}
.running::after {
    content: "";
    position: absolute;
    left: 7px;
    right: 7px;
    bottom: 0;
    height: 3px;
    background: #7ab8e6;
}
.current {
    background: #5a6b74;
}
.current::after {
    left: 0;
    right: 0;
}
.tray {
    display: flex;
    align-items: center;
    gap: 13px;
    margin-left: auto;
}
.battery {
    position: relative;
    width: 62px;
    height: 33px;
    margin-right: 14px;
    border: 3px solid #fff;
    background: linear-gradient(90deg, #1f9447 65%, #10192b 65%);
    line-height: 27px;
    text-align: center;
}
.battery::after {
    content: "";
    position: absolute;
    right: -8px;
    top: 6px;
    width: 5px;
    height: 15px;
    background: #fff;
}
.tray-lang {
    font-size: 22px;
}
.tray-ime {
    margin-left: 6px;
}
.clock {
    display: flex;
    flex-direction: column;
    align-items: center;
    width: 84px;
    margin-left: 16px;
    font-size: 19px;
    line-height: 28px;
}
```
